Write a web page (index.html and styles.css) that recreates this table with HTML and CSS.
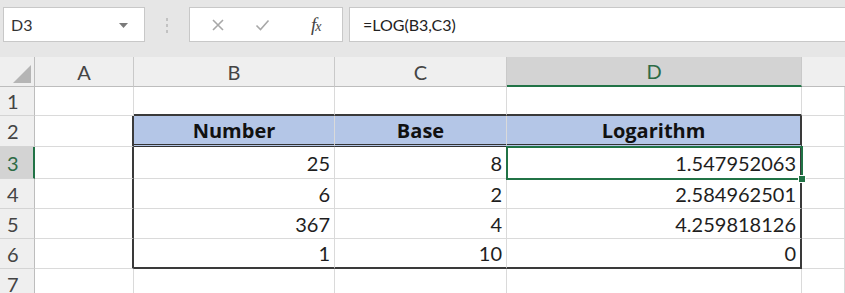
FILE: index.html
```html
<!DOCTYPE html>
<html lang="en">
<head>
<meta charset="utf-8">
<title>LOG function</title>
<link rel="stylesheet" href="styles.css">
</head>
<body>
<div class="app">
  <div class="toolbar">
    <div class="namebox">
      <span class="cellref">D3</span>
      <svg class="caret" width="9" height="5" viewBox="0 0 9 5"><path d="M0 0H9L4.5 5Z" fill="#7a7a7a"/></svg>
    </div>
    <div class="grip"><i></i><i></i><i></i></div>
    <div class="buttons">
      <svg class="ico" width="14" height="14" viewBox="0 0 14 14"><path d="M2 2L12 12M12 2L2 12" stroke="#a8a8a8" stroke-width="1.6" fill="none"/></svg>
      <svg class="ico" width="15" height="14" viewBox="0 0 15 14"><path d="M1.5 7.5L5.5 11.5L13.5 2.5" stroke="#a8a8a8" stroke-width="1.6" fill="none"/></svg>
      <span class="fx">f<small>x</small></span>
    </div>
    <div class="formula">=LOG(B3,C3)</div>
  </div>

  <div class="sheet">
    <div class="corner"><svg width="18" height="18" viewBox="0 0 18 18"><path d="M18 0V18H0Z" fill="#b5b5b5"/></svg></div>
    <div class="ch">A</div>
    <div class="ch">B</div>
    <div class="ch">C</div>
    <div class="ch ch-sel">D</div>
    <div class="ch ch-end"></div>

    <div class="rh">1</div>
    <div class="c"></div>
    <div class="c t-top"></div>
    <div class="c t-top"></div>
    <div class="c t-top"></div>
    <div class="c"></div>

    <div class="rh">2</div>
    <div class="c t-left"></div>
    <div class="c th">Number</div>
    <div class="c th">Base</div>
    <div class="c th t-right">Logarithm</div>
    <div class="c"></div>

    <div class="rh rh-sel">3</div>
    <div class="c t-left"></div>
    <div class="c num">25</div>
    <div class="c num">8</div>
    <div class="c num t-right">1.547952063</div>
    <div class="c"></div>

    <div class="rh">4</div>
    <div class="c t-left"></div>
    <div class="c num">6</div>
    <div class="c num">2</div>
    <div class="c num t-right">2.584962501</div>
    <div class="c"></div>

    <div class="rh">5</div>
    <div class="c t-left"></div>
    <div class="c num">367</div>
    <div class="c num">4</div>
    <div class="c num t-right">4.259818126</div>
    <div class="c"></div>

    <div class="rh">6</div>
    <div class="c t-left"></div>
    <div class="c num t-bottom">1</div>
    <div class="c num t-bottom">10</div>
    <div class="c num t-right t-bottom">0</div>
    <div class="c"></div>

    <div class="rh">7</div>
    <div class="c"></div>
    <div class="c"></div>
    <div class="c"></div>
    <div class="c"></div>
    <div class="c"></div>

    <div class="selection"><span class="handle"></span></div>
  </div>
</div>
</body>
</html>
```

FILE: styles.css
```css
html, body {
  margin: 0;
  padding: 0;
  background: #ffffff;
}

.app {
  width: 845px;
  height: 293px;
  overflow: hidden;
  font-family: Lato, "Open Sans", sans-serif;
  color: #1e1e1e;
}

/* formula bar strip */
.toolbar {
  height: 57px;
  background: #e6e6e6;
  display: flex;
  align-items: flex-start;
  padding: 7px 0 0 3px;
  box-sizing: border-box;
}

.namebox {
  width: 142px;
  height: 35px;
  box-sizing: border-box;
  background: #fff;
  border: 1px solid #c8c8c8;
  display: flex;
  align-items: center;
  justify-content: space-between;
  padding: 0 16px 0 7px;
  font-size: 16px;
  color: #333;
}

.caret {
  margin-top: 1px;
}

.grip {
  width: 44px;
  display: flex;
  flex-direction: column;
  align-items: center;
  gap: 3px;
  padding-top: 11px;
}

.grip i {
  width: 2px;
  height: 3px;
  background: #c2c2c2;
}

.buttons {
  width: 154px;
  height: 35px;
  box-sizing: border-box;
  background: #fff;
  border: 1px solid #c8c8c8;
  display: flex;
  align-items: center;
  padding-left: 21px;
}

.buttons .ico + .ico {
  margin-left: 30px;
}

.fx {
  margin-left: 41px;
  font-family: "Liberation Serif", "DejaVu Serif", serif;
  font-style: italic;
  font-size: 19px;
  color: #444;
  letter-spacing: -1px;
}

.fx small {
  font-size: 14px;
}

.formula {
  margin-left: 6px;
  flex: 1;
  height: 35px;
  box-sizing: border-box;
  background: #fff;
  border: 1px solid #c8c8c8;
  border-right: none;
  padding-left: 13px;
  display: flex;
  align-items: center;
  font-size: 16px;
  color: #222;
}

/* worksheet grid */
.sheet {
  position: relative;
  display: grid;
  grid-template-columns: 35px 99px 201px 172px 295px 1fr;
  grid-template-rows: 30px 29px 31px 32px 30px 30px 30px 30px;
}

.sheet > div {
  box-sizing: border-box;
}

.corner {
  background: #efefef;
  border-right: 1px solid #bdbdbd;
  border-bottom: 1px solid #bdbdbd;
  display: flex;
  align-items: flex-end;
  justify-content: flex-end;
  padding: 0 3px 3px 0;
}

.ch {
  background: #efefef;
  border-right: 1px solid #c9c9c9;
  border-bottom: 1px solid #bdbdbd;
  display: flex;
  align-items: center;
  justify-content: center;
  font-size: 20px;
  color: #444;
}

.ch-sel {
  background: #d3d3d3;
  border-bottom: 2px solid #217346;
  color: #2d6b45;
}

.ch-end {
  border-right: none;
}

.rh {
  background: #efefef;
  border-right: 1px solid #bdbdbd;
  border-bottom: 1px solid #d4d4d4;
  display: flex;
  align-items: center;
  padding-left: 7px;
  font-size: 20px;
  color: #444;
}

.rh-sel {
  background: #d3d3d3;
  border-right: 2px solid #217346;
  color: #2d6b45;
}

.c {
  border-right: 1px solid #dadada;
  border-bottom: 1px solid #dadada;
  display: flex;
  align-items: center;
  font-size: 20px;
  padding: 0 4px;
}

.num {
  justify-content: flex-end;
}

.th {
  background: #b4c6e7;
  justify-content: center;
  font-family: "Open Sans", Lato, sans-serif;
  font-size: 20px;
  font-weight: 700;
  color: #111;
  border-bottom: 3px double #333;
}

/* table frame around B2:D6 */
.t-top {
  border-bottom: 2px solid #3a3a3a;
}

.t-left {
  border-right: 2px solid #3a3a3a;
}

.t-right {
  border-right: 2px solid #3a3a3a;
}

.t-bottom {
  border-bottom: 2px solid #3a3a3a;
}

/* active cell D3 */
.selection {
  position: absolute;
  left: 506px;
  top: 89px;
  width: 297px;
  height: 34px;
  border: 2px solid #217346;
  box-sizing: border-box;
  pointer-events: none;
}

.handle {
  position: absolute;
  right: -5px;
  bottom: -5px;
  width: 6px;
  height: 6px;
  background: #217346;
  border: 1px solid #fff;
}
```
